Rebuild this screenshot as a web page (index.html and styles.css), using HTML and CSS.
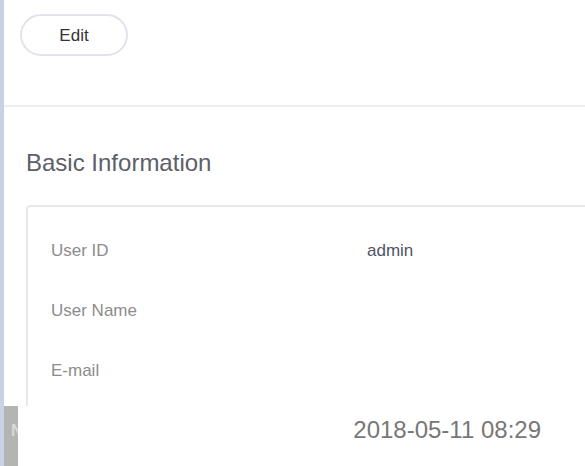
FILE: index.html
```html
<!DOCTYPE html>
<html lang="en">
<head>
<meta charset="utf-8">
<title>Profile</title>
<link rel="stylesheet" href="styles.css">
</head>
<body>
<div class="layout">
  <aside class="side-strip"></aside>
  <main class="main">
    <div class="toolbar">
      <button class="btn-edit" type="button">Edit</button>
    </div>
    <section class="section">
      <h2 class="section-title">Basic Information</h2>
      <div class="card">
        <div class="row"><span class="label">User ID</span><span class="value">admin</span></div>
        <div class="row"><span class="label">User Name</span><span class="value"></span></div>
        <div class="row"><span class="label">E-mail</span><span class="value"></span></div>
        <div class="row"><span class="label">Phone</span><span class="value"></span></div>
      </div>
    </section>
  </main>
</div>
<footer class="footer">
  <div class="footer-tab"><span class="footer-tab-text">Nav</span></div>
  <div class="footer-time">2018-05-11 08:29</div>
</footer>
</body>
</html>
```
FILE: styles.css
```css
html, body {
  margin: 0;
  padding: 0;
  height: 466px;
  overflow: hidden;
  background: #ffffff;
  font-family: "Liberation Sans", Arial, sans-serif;
}

.layout {
  display: flex;
  min-height: 466px;
}

.side-strip {
  width: 4px;
  flex: none;
  background: #c8d2e6;
}

.main {
  flex: 1;
  min-width: 0;
}

.toolbar {
  padding: 14px 0 49px 16px;
  border-bottom: 2px solid #eeeeee;
}

.btn-edit {
  width: 108px;
  height: 42px;
  border: 2px solid #e0e3e9;
  border-radius: 21px;
  background: #ffffff;
  color: #333333;
  font-family: "Liberation Sans", Arial, sans-serif;
  font-size: 17px;
  padding: 0;
  line-height: 19px;
  cursor: pointer;
}

.section {
  padding-left: 22px;
}

.section-title {
  margin: 40px 0 26px;
  font-size: 24px;
  line-height: 32px;
  font-weight: normal;
  color: #5c6068;
}

.card {
  margin-right: -20px;
  border: 2px solid #e8e8e8;
  border-radius: 4px;
  padding: 14px 0 0 23px;
}

.row {
  display: grid;
  grid-template-columns: 316px 1fr;
  height: 60px;
  line-height: 60px;
  font-size: 17px;
}

.label {
  color: #8c8c8c;
}

.value {
  color: #4f5563;
}

.footer {
  position: fixed;
  left: 4px;
  right: 0;
  bottom: 0;
  height: 60px;
  background: #ffffff;
  display: flex;
  align-items: flex-start;
}

.footer-tab {
  width: 14px;
  height: 60px;
  flex: none;
  overflow: hidden;
  background: #b4b5b3;
  box-sizing: border-box;
  padding: 17px 0 0 7px;
}

.footer-tab-text {
  display: block;
  font-size: 16px;
  line-height: 16px;
  font-weight: bold;
  color: #d8d9d8;
  white-space: nowrap;
}

.footer-time {
  margin-left: auto;
  padding: 12px 44px 0 0;
  font-size: 24px;
  line-height: 24px;
  color: #777777;
  white-space: nowrap;
}
```
